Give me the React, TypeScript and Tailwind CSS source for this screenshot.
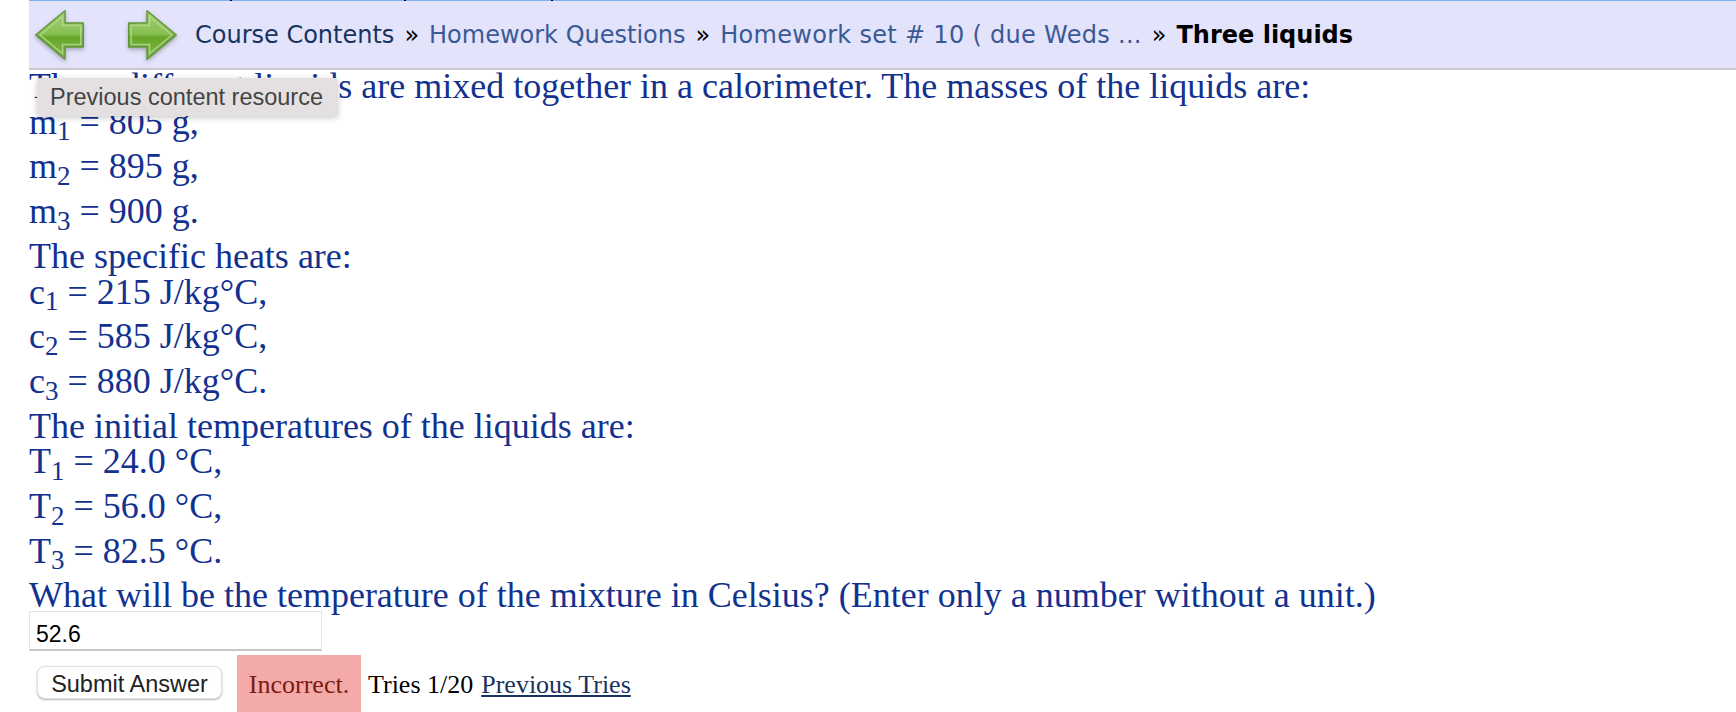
const Sub = ({ a, n, rest }: { a: string; n: string; rest: string }) => (
  <div className="pb-[9px]">
    {a}
    <sub>{n}</sub>
    {rest}
  </div>
);

const Arrow = ({ id, flip }: { id: string; flip?: boolean }) => (
  <svg width="50" height="50" viewBox="0 0 50 50" className="shrink-0 overflow-visible drop-shadow-[0_2px_2px_rgba(0,0,0,0.28)]">
    <defs>
      <linearGradient id={id} x1="0" y1="0" x2="0" y2="1">
        <stop offset="0" stopColor="#a6d070" />
        <stop offset="0.48" stopColor="#86bf52" />
        <stop offset="0.54" stopColor="#68a72a" />
        <stop offset="1" stopColor="#7fb54a" />
      </linearGradient>
    </defs>
    <g transform={flip ? "translate(50 0) scale(-1 1)" : undefined}>
      <path d="M0.7 25 L30 0.7 L30 13 L48.3 13 L48.3 37 L30 37 L30 49.3 Z" fill={`url(#${id})`} stroke="#62953a" strokeWidth="1.4" strokeLinejoin="round" />
      <path d="M5 25 L27.5 6.5 L27.5 15.5 L45.8 15.5 L45.8 34.5 L27.5 34.5 L27.5 43.5 Z" fill="none" stroke="#b4d892" strokeWidth="1.5" strokeOpacity="0.85" />
    </g>
  </svg>
);

export default function App() {
  return (
    <div className="relative h-[712px] w-[1736px] overflow-hidden bg-white pl-[29px] font-['Liberation_Serif',serif] text-[#13318f]">
      <nav className="relative flex h-[70px] items-center border-t border-t-[#7fb3f7] border-b-2 border-b-[#c9c9c9] bg-[#e3e3fb] pl-[6px] font-['DejaVu_Sans',sans-serif] text-[24px] text-[#3a5a96]">
        <span className="absolute left-[201px] top-[-1px] h-px w-[2px] bg-black" />
        <span className="absolute left-[375px] top-[-1px] h-px w-[2px] bg-black" />
        <span className="absolute left-[522px] top-[-1px] h-px w-[2px] bg-black" />
        <Arrow id="al" />
        <div className="ml-[42px]">
          <Arrow id="ar" flip />
        </div>
        <span className="ml-[18px] text-[#17335f]">Course Contents</span>
        <span className="mx-[10px] text-black">»</span>
        <span>Homework Questions</span>
        <span className="mx-[10px] text-black">»</span>
        <span className="tracking-[0.3px]">Homework set # 10 ( due Weds ...</span>
        <span className="mx-[10px] text-black">»</span>
        <span className="font-bold text-black">Three liquids</span>
      </nav>

      <main className="mt-[-1px] text-[36px] leading-[35.7px]">
        <div>Three different liquids are mixed together in a calorimeter. The masses of the liquids are:</div>
        <Sub a="m" n="1" rest=" = 805 g," />
        <Sub a="m" n="2" rest=" = 895 g," />
        <Sub a="m" n="3" rest=" = 900 g." />
        <div>The specific heats are:</div>
        <Sub a="c" n="1" rest=" = 215 J/kg°C," />
        <Sub a="c" n="2" rest=" = 585 J/kg°C," />
        <Sub a="c" n="3" rest=" = 880 J/kg°C." />
        <div>The initial temperatures of the liquids are:</div>
        <Sub a="T" n="1" rest=" = 24.0 °C," />
        <Sub a="T" n="2" rest=" = 56.0 °C," />
        <Sub a="T" n="3" rest=" = 82.5 °C." />
        <div>What will be the temperature of the mixture in Celsius? (Enter only a number without a unit.)</div>
      </main>

      <div className="mt-[-3px] flex h-[40px] w-[293px] items-center border border-[#e4e4e4] border-b-2 border-b-[#c8c8c8] bg-white pl-[6px] pt-[8px] font-['Liberation_Sans',sans-serif] text-[23px] text-black">
        52.6
      </div>

      <div className="mt-[4px] flex h-[58px] items-center pl-[8px]">
        <button className="mt-[-3px] h-[33px] w-[185px] rounded-[8px] border border-[#e2e2e2] bg-white font-['Liberation_Sans',sans-serif] text-[23.5px] text-[#222] shadow-[0_1px_2px_rgba(0,0,0,0.3)]">
          Submit Answer
        </button>
        <span className="ml-[15px] flex h-full w-[124px] items-center justify-center bg-[#f4aaa8] text-[26px] text-[#7c1a12]">
          Incorrect.
        </span>
        <span className="ml-[7px] text-[26px] text-black">Tries 1/20</span>
        <a className="ml-[8px] text-[26px] text-[#17335f] underline">Previous Tries</a>
      </div>

      <div className="absolute left-[37px] top-[78px] flex h-[38px] w-[301px] items-center rounded-[3px] bg-[#e4e0e1] pl-[13px] pt-[1px] font-['Liberation_Sans',sans-serif] text-[23.5px] text-[#444] shadow-[0_2px_6px_rgba(0,0,0,0.2)]">
        Previous content resource
      </div>
    </div>
  );
}
